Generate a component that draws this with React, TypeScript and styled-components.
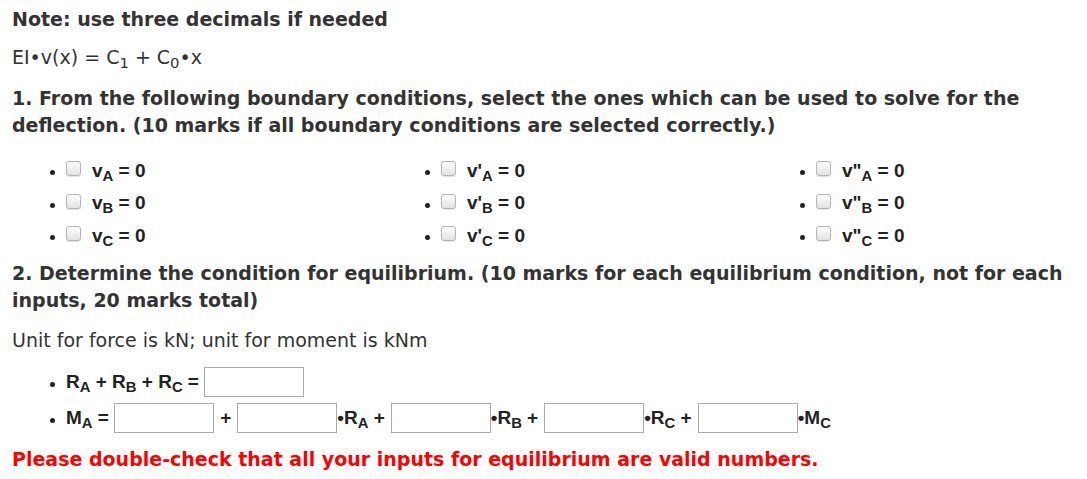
import React from "react";
import styled, { createGlobalStyle } from "styled-components";

const GlobalStyle = createGlobalStyle`
  body {
    margin: 0;
    background: #fff;
    color: #333;
    font-family: "DejaVu Sans", Verdana, sans-serif;
  }
`;

const Page = styled.div`
  padding: 6px 12px 0 12px;
  font-size: 19px;
  line-height: 27px;
`;

const Note = styled.p`
  margin: 0;
  font-weight: bold;
`;

const Para = styled.p<{ $top?: number }>`
  margin: ${(p) => p.$top ?? 11}px 0 0 0;
`;

const Heading = styled.p<{ $top?: number }>`
  margin: ${(p) => p.$top ?? 14}px 0 0 0;
  font-weight: bold;
`;

const Sub = styled.sub`
  font-size: 0.78em;
  line-height: 0;
  vertical-align: -0.3em;
`;

const ConditionGrid = styled.div`
  display: grid;
  grid-template-columns: repeat(3, 375px);
  margin-top: 15px;
`;

const BulletList = styled.ul<{ $indent: number; $top?: number }>`
  list-style: none;
  margin: ${(p) => p.$top ?? 0}px 0 0 0;
  padding: 0 0 0 ${(p) => p.$indent}px;
`;

const Bullet = styled.li<{ $h: number }>`
  display: flex;
  align-items: center;
  height: ${(p) => p.$h}px;
  font-family: "Liberation Sans", Arial, sans-serif;
  font-weight: bold;
  font-size: 19px;
  color: #222;

  &::before {
    content: "";
    width: 5px;
    height: 5px;
    border-radius: 50%;
    background: #222;
    margin-right: 11px;
    margin-top: 5px;
  }
`;

const Check = styled.input.attrs({ type: "checkbox" })`
  appearance: none;
  box-sizing: border-box;
  width: 15px;
  height: 15px;
  margin: -3px 11px 0 0;
  border: 1px solid #b5b5b5;
  border-radius: 3px;
  background: linear-gradient(#fdfdfd, #e3e3e3);
  box-shadow: 0 1px 1px rgba(0, 0, 0, 0.12);
`;

const Field = styled.input.attrs({ type: "text" })`
  box-sizing: border-box;
  width: 100px;
  height: 30px;
  margin: 0;
  border: 1px solid #ababab;
  background: #fff;
`;

const Op = styled.span<{ $l?: number; $r?: number }>`
  margin: 0 ${(p) => p.$r ?? 6}px 0 ${(p) => p.$l ?? 0}px;
  white-space: pre;
`;

const Warning = styled.p`
  margin: 10px 0 0 0;
  font-weight: bold;
  color: #f00;
`;

const prefixes = ["v", "v'", 'v"'];
const points = ["A", "B", "C"];

export default function App() {
  return (
    <Page>
      <GlobalStyle />
      <Note>Note: use three decimals if needed</Note>
      <Para>
        EI•v(x) = C<Sub>1</Sub> + C<Sub>0</Sub>•x
      </Para>
      <Heading>
        1. From the following boundary conditions, select the ones which can be
        used to solve for the deflection. (10 marks if all boundary conditions
        are selected correctly.)
      </Heading>
      <ConditionGrid>
        {prefixes.map((pre) => (
          <BulletList key={pre} $indent={38}>
            {points.map((pt) => (
              <Bullet key={pt} $h={32.5}>
                <Check />
                <span>
                  {pre}
                  <Sub>{pt}</Sub> = 0
                </span>
              </Bullet>
            ))}
          </BulletList>
        ))}
      </ConditionGrid>
      <Heading $top={8}>
        2. Determine the condition for equilibrium. (10 marks for each
        equilibrium condition, not for each inputs, 20 marks total)
      </Heading>
      <Para $top={13}>Unit for force is kN; unit for moment is kNm</Para>
      <BulletList $indent={38} $top={10}>
        <Bullet $h={36}>
          <span>
            R<Sub>A</Sub> + R<Sub>B</Sub> + R<Sub>C</Sub> =
          </span>
          <Op $r={0}> </Op>
          <Field />
        </Bullet>
        <Bullet $h={36}>
          <span>
            M<Sub>A</Sub> =
          </span>
          <Op $r={0}> </Op>
          <Field />
          <Op $l={6}>+</Op>
          <Field />
          <Op>
            •R<Sub>A</Sub> +
          </Op>
          <Field />
          <Op>
            •R<Sub>B</Sub> +
          </Op>
          <Field />
          <Op>
            •R<Sub>C</Sub> +
          </Op>
          <Field />
          <Op>
            •M<Sub>C</Sub>
          </Op>
        </Bullet>
      </BulletList>
      <Warning>
        Please double-check that all your inputs for equilibrium are valid
        numbers.
      </Warning>
    </Page>
  );
}
